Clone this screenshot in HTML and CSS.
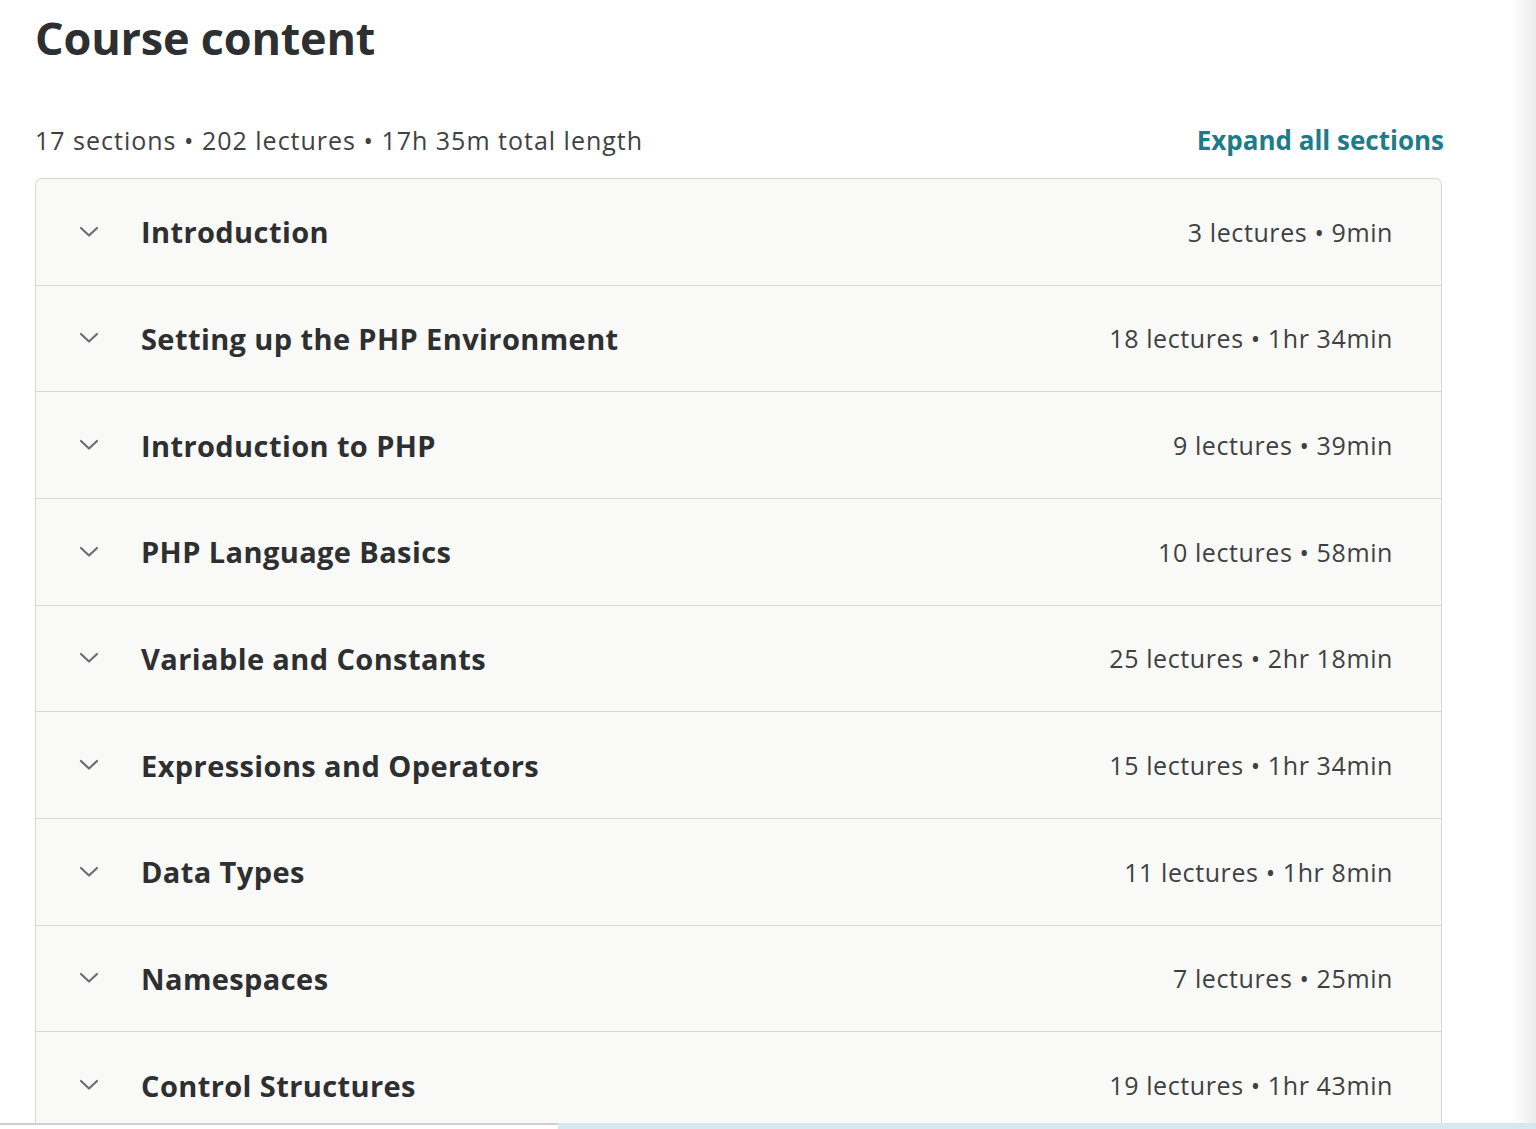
FILE: index.html
```html
<!DOCTYPE html>
<html lang="en">
<head>
<meta charset="utf-8">
<title>Course content</title>
<link rel="stylesheet" href="styles.css">
</head>
<body>
<main class="page">
  <h1 class="title">Course content</h1>
  <div class="summary">
    <span class="summary-text">17 sections • 202 lectures • 17h 35m total length</span>
    <button class="expand">Expand all sections</button>
  </div>
  <div class="sections">
    <div class="section"><span class="chev"><svg viewBox="0 0 20 12" width="20" height="12"><path d="M2 2 L10 9.5 L18 2" fill="none" stroke="#6a6f73" stroke-width="2.2" stroke-linecap="round" stroke-linejoin="round"/></svg></span><span class="name">Introduction</span><span class="meta">3 lectures • 9min</span></div>
    <div class="section"><span class="chev"><svg viewBox="0 0 20 12" width="20" height="12"><path d="M2 2 L10 9.5 L18 2" fill="none" stroke="#6a6f73" stroke-width="2.2" stroke-linecap="round" stroke-linejoin="round"/></svg></span><span class="name">Setting up the PHP Environment</span><span class="meta">18 lectures • 1hr 34min</span></div>
    <div class="section"><span class="chev"><svg viewBox="0 0 20 12" width="20" height="12"><path d="M2 2 L10 9.5 L18 2" fill="none" stroke="#6a6f73" stroke-width="2.2" stroke-linecap="round" stroke-linejoin="round"/></svg></span><span class="name">Introduction to PHP</span><span class="meta">9 lectures • 39min</span></div>
    <div class="section"><span class="chev"><svg viewBox="0 0 20 12" width="20" height="12"><path d="M2 2 L10 9.5 L18 2" fill="none" stroke="#6a6f73" stroke-width="2.2" stroke-linecap="round" stroke-linejoin="round"/></svg></span><span class="name">PHP Language Basics</span><span class="meta">10 lectures • 58min</span></div>
    <div class="section"><span class="chev"><svg viewBox="0 0 20 12" width="20" height="12"><path d="M2 2 L10 9.5 L18 2" fill="none" stroke="#6a6f73" stroke-width="2.2" stroke-linecap="round" stroke-linejoin="round"/></svg></span><span class="name">Variable and Constants</span><span class="meta">25 lectures • 2hr 18min</span></div>
    <div class="section"><span class="chev"><svg viewBox="0 0 20 12" width="20" height="12"><path d="M2 2 L10 9.5 L18 2" fill="none" stroke="#6a6f73" stroke-width="2.2" stroke-linecap="round" stroke-linejoin="round"/></svg></span><span class="name">Expressions and Operators</span><span class="meta">15 lectures • 1hr 34min</span></div>
    <div class="section"><span class="chev"><svg viewBox="0 0 20 12" width="20" height="12"><path d="M2 2 L10 9.5 L18 2" fill="none" stroke="#6a6f73" stroke-width="2.2" stroke-linecap="round" stroke-linejoin="round"/></svg></span><span class="name">Data Types</span><span class="meta">11 lectures • 1hr 8min</span></div>
    <div class="section"><span class="chev"><svg viewBox="0 0 20 12" width="20" height="12"><path d="M2 2 L10 9.5 L18 2" fill="none" stroke="#6a6f73" stroke-width="2.2" stroke-linecap="round" stroke-linejoin="round"/></svg></span><span class="name">Namespaces</span><span class="meta">7 lectures • 25min</span></div>
    <div class="section"><span class="chev"><svg viewBox="0 0 20 12" width="20" height="12"><path d="M2 2 L10 9.5 L18 2" fill="none" stroke="#6a6f73" stroke-width="2.2" stroke-linecap="round" stroke-linejoin="round"/></svg></span><span class="name">Control Structures</span><span class="meta">19 lectures • 1hr 43min</span></div>
  </div>
</main>
<div class="edge-right"></div>
<div class="edge-bottom"><span class="edge-gray"></span><span class="edge-blue"></span></div>
</body>
</html>
```
FILE: styles.css
```css
html, body {
  margin: 0;
  padding: 0;
  background: #ffffff;
  overflow: hidden;
}
body {
  font-family: "Open Sans", "Noto Sans", "Liberation Sans", sans-serif;
  color: #2d2f31;
}
.page {
  width: 1407px;
  padding: 8px 0 0 35px;
}
.title {
  margin: 0;
  font-size: 45px;
  line-height: 60px;
  font-weight: 700;
  letter-spacing: -0.2px;
  color: #2d2f31;
}
.summary {
  display: flex;
  justify-content: space-between;
  align-items: center;
  margin-top: 52px;
  height: 40px;
}
.summary-text {
  font-size: 25px;
  letter-spacing: 1px;
  color: #3e4143;
}
.expand {
  border: 0;
  background: none;
  padding: 0;
  margin-right: -2px;
  font-family: inherit;
  font-size: 26px;
  font-weight: 700;
  color: #1d7b8a;
  letter-spacing: 0;
}
.sections {
  margin-top: 18px;
  border: 1px solid #d8d8d5;
  border-bottom: 0;
  border-radius: 7px 7px 0 0;
  background: #f9f9f7;
  overflow: hidden;
}
.section {
  display: flex;
  align-items: center;
  height: 105.67px;
  border-bottom: 1px solid #d8d8d5;
  padding: 0 48px 0 43px;
}
.chev {
  display: flex;
  width: 20px;
  height: 12px;
  margin-right: 42px;
}
.name {
  flex: 1;
  font-size: 29px;
  font-weight: 700;
  color: #2d2f31;
  letter-spacing: 0.4px;
}
.meta {
  font-size: 25px;
  letter-spacing: 0.6px;
  color: #3e4143;
}
.edge-right {
  position: fixed;
  top: 0;
  right: 0;
  width: 24px;
  height: 100%;
  background: linear-gradient(to right, rgba(240,240,240,0), #ececec);
}
.edge-bottom {
  position: fixed;
  left: 0;
  right: 0;
  bottom: 0;
  height: 6px;
  display: flex;
}
.edge-gray {
  width: 558px;
  border-top: 2px solid #cfcfcf;
  background: #ffffff;
}
.edge-blue {
  flex: 1;
  background: #d6e9ef;
}
```
